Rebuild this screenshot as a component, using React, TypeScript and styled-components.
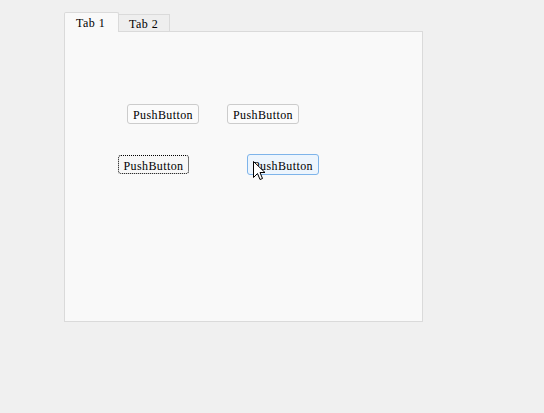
import React from "react";
import styled, { createGlobalStyle } from "styled-components";

const Global = createGlobalStyle`
  html, body { margin: 0; padding: 0; background: #f0f0f0; }
  body { width: 544px; height: 413px; overflow: hidden; }
`;

const Page = styled.div`
  width: 544px;
  height: 413px;
  background: #f0f0f0;
  padding: 12px 0 0 64px;
  box-sizing: border-box;
  font-family: "Liberation Serif", "DejaVu Serif", serif;
  font-size: 12px;
  color: #000;
`;

const TabBar = styled.div`
  display: flex;
  align-items: flex-end;
  height: 20px;
  position: relative;
  z-index: 1;
`;

const Tab = styled.div<{ $active?: boolean }>`
  box-sizing: border-box;
  height: ${(p) => (p.$active ? "20px" : "18px")};
  width: ${(p) => (p.$active ? "55px" : "51px")};
  padding-left: ${(p) => (p.$active ? "11px" : "10px")};
  padding-top: ${(p) => (p.$active ? "4px" : "3px")};
  background: ${(p) => (p.$active ? "#f9f9f9" : "#eeeeee")};
  border: 1px solid #dadada;
  border-bottom: ${(p) => (p.$active ? "none" : "1px solid #dadada")};
  border-left: ${(p) => (p.$active ? "1px solid #dadada" : "none")};
  border-radius: ${(p) => (p.$active ? "2px 2px 0 0" : "0")};
  white-space: pre;
  line-height: 13px;
  letter-spacing: 0.5px;
`;

const Pane = styled.div`
  box-sizing: border-box;
  width: 359px;
  height: 291px;
  margin-top: -1px;
  background: #f9f9f9;
  border: 1px solid #dadada;
  position: relative;
  padding-top: 72px;
  display: flex;
  flex-direction: column;
`;

const Row = styled.div<{ $left: number; $gap: number; $top?: number }>`
  display: flex;
  align-items: flex-start;
  padding-left: ${(p) => p.$left}px;
  gap: ${(p) => p.$gap}px;
  margin-top: ${(p) => p.$top ?? 0}px;
`;

type Variant = "normal" | "focus" | "hover";

const Button = styled.div<{ $variant: Variant; $w: number; $h: number; $dy?: number }>`
  box-sizing: border-box;
  width: ${(p) => p.$w}px;
  height: ${(p) => p.$h}px;
  margin-top: ${(p) => p.$dy ?? 0}px;
  display: flex;
  align-items: center;
  justify-content: center;
  border-radius: 3px;
  font-size: 12px;
  line-height: 13px;
  letter-spacing: 0.4px;
  border: ${(p) =>
    p.$variant === "focus"
      ? "1px dotted #000"
      : p.$variant === "hover"
      ? "1px solid #7eb4ea"
      : "1px solid #cccccc"};
  background: ${(p) =>
    p.$variant === "hover" ? "#edf5fd" : p.$variant === "focus" ? "#f7f7f7" : "#fbfbfb"};
  padding-top: 3px;
`;

const CursorWrap = styled.div`
  position: absolute;
  left: 188px;
  top: 129px;
  width: 13px;
  height: 21px;
`;

const Cursor = () => (
  <CursorWrap>
    <svg width="13" height="21" viewBox="0 0 13 21">
      <path
        d="M0.5 0.5 L0.5 16.5 L4.5 12.5 L7 18.5 L9.5 17.5 L7 11.5 L12 11.5 Z"
        fill="#fff"
        stroke="#000"
        strokeWidth="1"
        strokeLinejoin="miter"
      />
    </svg>
  </CursorWrap>
);

export default function App() {
  return (
    <>
      <Global />
      <Page>
        <TabBar>
          <Tab $active>Tab 1</Tab>
          <Tab>Tab 2</Tab>
        </TabBar>
        <Pane>
          <Row $left={62} $gap={28}>
            <Button $variant="normal" $w={72} $h={20}>PushButton</Button>
            <Button $variant="normal" $w={72} $h={20}>PushButton</Button>
          </Row>
          <Row $left={53} $gap={58} $top={30}>
            <Button $variant="focus" $w={71} $h={19} $dy={1}>PushButton</Button>
            <Button $variant="hover" $w={72} $h={21}>PushButton</Button>
          </Row>
          <Cursor />
        </Pane>
      </Page>
    </>
  );
}
